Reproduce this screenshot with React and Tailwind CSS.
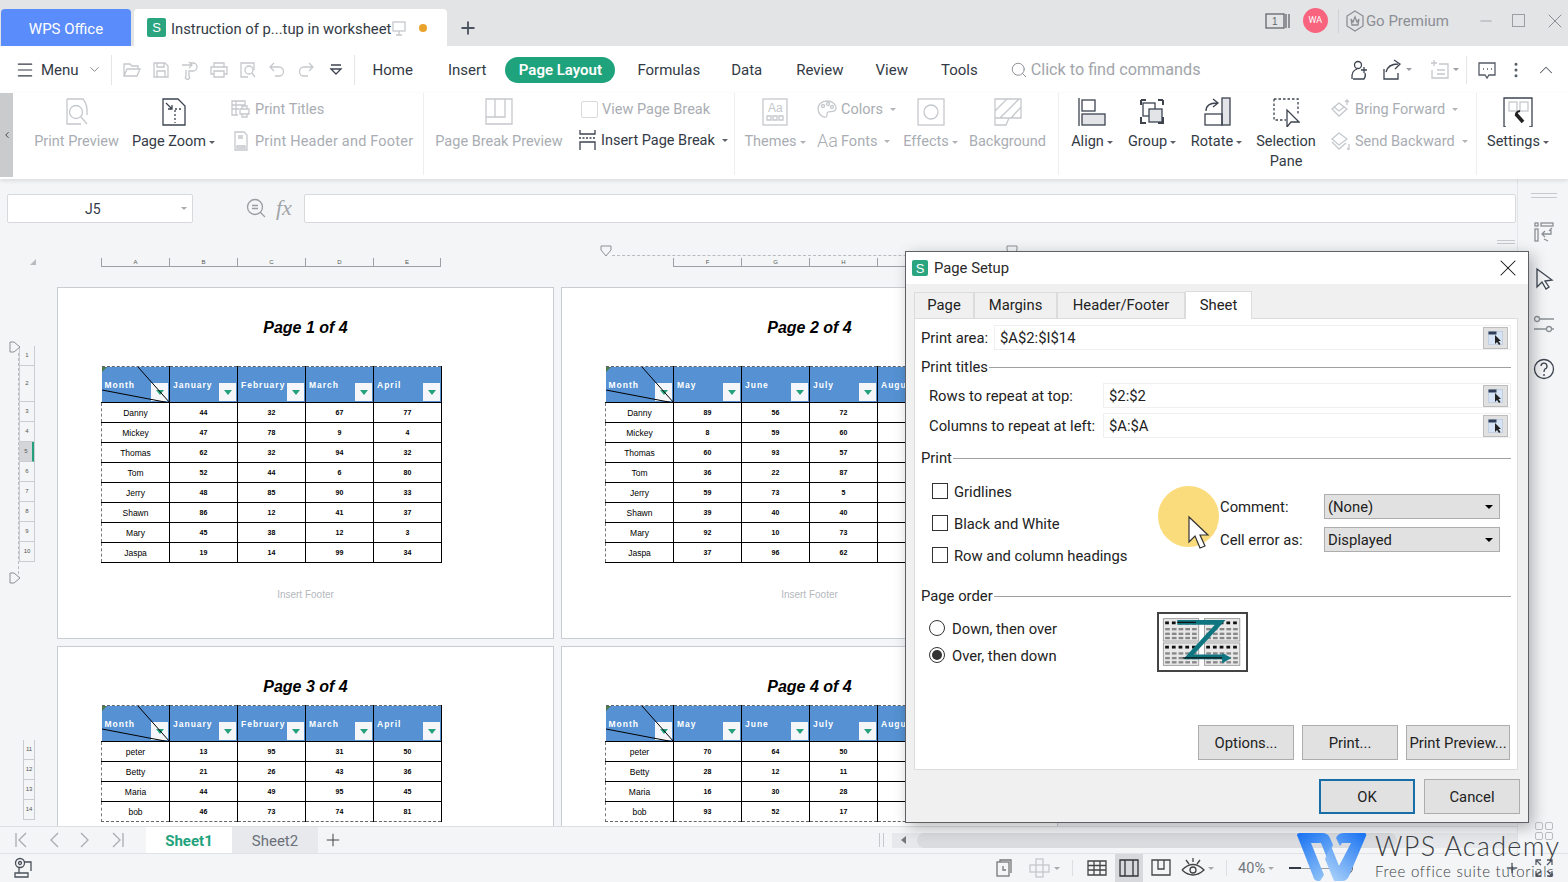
import { Menu, ChevronDown, Plus, Minus, Search, ChevronUp, EllipsisVertical, X, ChevronLeft } from "lucide-react"

const dark = "#3d4450"
const off = "#c5c8cc"

const page1 = {
    months: ["January", "February", "March", "April"],
    rows: [
        ["Danny", 44, 32, 67, 77],
        ["Mickey", 47, 78, 9, 4],
        ["Thomas", 62, 32, 94, 32],
        ["Tom", 52, 44, 6, 80],
        ["Jerry", 48, 85, 90, 33],
        ["Shawn", 86, 12, 41, 37],
        ["Mary", 45, 38, 12, 3],
        ["Jaspa", 19, 14, 99, 34],
    ],
}
const page2 = {
    months: ["May", "June", "July", "August"],
    rows: [
        ["Danny", 89, 56, 72, ""],
        ["Mickey", 8, 59, 60, ""],
        ["Thomas", 60, 93, 57, ""],
        ["Tom", 36, 22, 87, ""],
        ["Jerry", 59, 73, 5, ""],
        ["Shawn", 39, 40, 40, ""],
        ["Mary", 92, 10, 73, ""],
        ["Jaspa", 37, 96, 62, ""],
    ],
}
const page3 = {
    months: ["January", "February", "March", "April"],
    rows: [
        ["peter", 13, 95, 31, 50],
        ["Betty", 21, 26, 43, 36],
        ["Maria", 44, 49, 95, 45],
        ["bob", 46, 73, 74, 81],
    ],
}
const page4 = {
    months: ["May", "June", "July", "August"],
    rows: [
        ["peter", 70, 64, 50, ""],
        ["Betty", 28, 12, 11, ""],
        ["Maria", 16, 30, 28, ""],
        ["bob", 93, 52, 17, ""],
    ],
}

function Svg({ w = 28, h = 30, c = dark, children, sw = 1.3 }) {
    return (
        <svg width={w} height={h} viewBox={`0 0 ${w} ${h}`} fill="none" stroke={c} strokeWidth={sw} className="shrink-0">
            {children}
        </svg>
    )
}

function Caret({ c = "#9a9da3" }) {
    return <span className="inline-block ml-[3px] align-middle w-0 h-0 border-x-[3px] border-x-transparent border-t-[3px]" style={{ borderTopColor: c }} />
}

function SheetIcon({ size = 18 }) {
    return (
        <span className="flex items-center justify-center shrink-0 rounded-[2px] bg-[#2ba57f] text-white font-['Liberation_Sans',sans-serif] text-[13px] leading-none" style={{ width: size, height: size }}>
            S
        </span>
    )
}

function LargeBtn({ w, ml, label, disabled, caret, icon, second }) {
    return (
        <div className="flex flex-col items-center shrink-0 pt-[3px]" style={{ width: w, marginLeft: ml }}>
            <div className="h-[31px] flex items-center">{icon}</div>
            <div className={`mt-[5px] h-[20px] leading-[20px] whitespace-nowrap ${disabled ? "text-[#a9adb3]" : "text-[#333a45]"}`}>
                {label}
                {caret && <Caret c={disabled ? "#b0b3b8" : "#5c6168"} />}
            </div>
            {second && <div className="h-[20px] leading-[20px] text-[#333a45]">{second}</div>}
        </div>
    )
}

function SmallBtn({ label, disabled, caret, icon, iconW = 20, spread }) {
    return (
        <div className={`h-[22px] flex items-center gap-[4px] whitespace-nowrap ${disabled ? "text-[#a9adb3]" : "text-[#333a45]"}`}>
            <div className="flex justify-center shrink-0" style={{ width: iconW }}>{icon}</div>
            <span className={`pt-[2px] ${spread ? "tracking-[0.2px]" : ""}`}>{label}</span>
            {caret && <Caret c={disabled ? "#b0b3b8" : "#5c6168"} />}
        </div>
    )
}

function Sep({ ml }) {
    return <div className="w-px h-[82px] bg-[#edeef0] shrink-0" style={{ marginLeft: ml }} />
}

function FilterBox() {
    return (
        <span className="absolute right-[1px] bottom-[1px] w-[17px] h-[18px] bg-[#f4f6f8] flex items-center justify-center">
            <span className="w-0 h-0 border-x-[4px] border-x-transparent border-t-[5px] border-t-[#25a07c]" />
        </span>
    )
}

function PageTable({ data, dashBottom }) {
    return (
        <table className="border-collapse table-fixed w-[340px] font-['Liberation_Sans',sans-serif] text-black">
            <thead>
                <tr className="h-[36px] bg-[#5591d3] text-white text-[8.5px] font-bold tracking-[1px]">
                    <th className="relative w-[68px] p-0 pl-[3px] pt-[1px] text-left border-t border-t-[#5e6670] [border-top-style:dashed] border-r border-r-black border-b border-b-black overflow-hidden">
                        Month
                        <FilterBox />
                        <svg width="68" height="36" className="absolute left-0 top-0" stroke="#000" strokeWidth="1">
                            <path d="M36 0 L68 36" />
                            <path d="M0 23 L68 36" />
                            <path d="M0 0 h5 l-5 5z" fill="#4d7a4d" stroke="none" />
                        </svg>
                    </th>
                    {data.months.map((m) => (
                        <th key={m} className="relative w-[68px] p-0 pl-[3px] pt-[1px] text-left border-t border-t-[#5e6670] [border-top-style:dashed] border-r border-r-black border-b border-b-black whitespace-nowrap overflow-hidden">
                            {m}
                            <FilterBox />
                        </th>
                    ))}
                </tr>
            </thead>
            <tbody>
                {data.rows.map((r, ri) => {
                    const last = dashBottom && ri === data.rows.length - 1
                    const bottom = last ? "border-b border-b-[#666] [border-bottom-style:dashed]" : "border-b border-b-black"
                    return (
                        <tr key={r[0]} className="h-[20px]">
                            <td className={`p-0 pt-[1px] text-center text-[8.5px] border-l border-l-[#777] [border-left-style:dashed] border-r border-r-black ${bottom}`}>{r[0]}</td>
                            {r.slice(1).map((v, i) => (
                                <td key={i} className={`p-0 pt-[1px] text-center text-[7px] font-bold border-r border-r-black ${bottom}`}>{v}</td>
                            ))}
                        </tr>
                    )
                })}
            </tbody>
        </table>
    )
}

function PagePreview({ title, data, tall, footer }) {
    return (
        <div className={`w-[497px] bg-white border border-[#c9ccd1] shrink-0 relative ${tall ? "h-[352px]" : "h-[300px]"}`}>
            <div className="mt-[30px] text-center font-['Liberation_Sans',sans-serif] font-bold italic text-[16px] text-black h-[20px] leading-[20px]">
                {title}
            </div>
            <div className={`pl-[43px] ${tall ? "mt-[28px]" : "mt-[8px]"}`}>
                <PageTable data={data} dashBottom={!tall} />
            </div>
            {footer && <div className="mt-[24px] text-center text-[10px] text-[#b5b8bc] font-['Liberation_Sans',sans-serif]">Insert Footer</div>}
        </div>
    )
}

function RowNums({ nums, active }) {
    return (
        <div className="border-l border-r border-[#c9ccd1] w-[16px] ml-[19px] font-['Liberation_Sans',sans-serif] text-[6px] text-[#555]">
            {nums.map((n) => (
                <div
                    key={n}
                    className={`flex items-center justify-center border-b border-[#c9ccd1] ${n === 2 ? "h-[36px]" : "h-[20px]"} ${n === active ? "bg-[#d4d5d8] border-r-2 border-r-[#25a07c]" : ""}`}
                >
                    {n}
                </div>
            ))}
        </div>
    )
}

function TopRuler({ ml, letters }) {
    return (
        <div className="flex h-[9px] border-b border-[#9ca0a6] shrink-0 font-['Liberation_Sans',sans-serif] text-[6px] text-[#555]" style={{ marginLeft: ml }}>
            {letters.map((l) => (
                <div key={l} className="w-[68px] border-l last:border-r border-[#9ca0a6] text-center leading-[9px]">{l}</div>
            ))}
        </div>
    )
}

function HandleTri({ className }) {
    return (
        <svg width="12" height="12" viewBox="0 0 12 12" fill="#f3f5f7" stroke="#8d9095" className={className}>
            <path d="M1 1 H11 V5 L6 11 L1 5 Z" />
        </svg>
    )
}

function HandleRight({ className }) {
    return (
        <svg width="12" height="12" viewBox="0 0 12 12" fill="#f3f5f7" stroke="#8d9095" className={className}>
            <path d="M1 1 V11 H5 L11 6 L5 1 Z" />
        </svg>
    )
}

function Pick() {
    return (
        <span className="w-[25px] h-[22px] bg-[#e1e1e1] border border-[#bdbdbd] flex items-center justify-center shrink-0">
            <svg width="15" height="14" viewBox="0 0 15 14">
                <rect x="0.5" y="0.5" width="14" height="13" fill="#d6e4f5" stroke="#c3d0df" />
                <rect x="0.5" y="0.5" width="8" height="3" fill="#2f3e56" />
                <path d="M7 4 L7 13 L9 11 L11 14 L12.5 13 L10.5 10 L13 10 Z" fill="#222" />
            </svg>
        </span>
    )
}

function Field({ label, value, labelW, pl }) {
    return (
        <div className="flex items-center" style={{ paddingLeft: pl }}>
            <span className="whitespace-nowrap shrink-0 pt-[2px]" style={{ width: labelW }}>{label}</span>
            <div className="w-full flex items-center justify-between h-[25px] border border-[#f0f0f0] pl-[5px] pr-[2px]">
                <span className="pt-[2px]">{value}</span>
                <Pick />
            </div>
        </div>
    )
}

function SectionLine({ label }) {
    return (
        <div className="flex items-center h-[20px] pl-[6px]">
            <span className="whitespace-nowrap">{label}</span>
            <div className="flex-1 h-px bg-[#a0a0a0] ml-[1px]" />
        </div>
    )
}

function Check({ label }) {
    return (
        <div className="flex items-center h-[20px] gap-[6px]">
            <span className="w-[16px] h-[16px] border border-[#333] bg-white" />
            <span className="pt-[2px]">{label}</span>
        </div>
    )
}

function Select({ value }) {
    return (
        <div className="w-[176px] h-[25px] bg-[#e1e1e1] border border-[#adadad] flex items-center justify-between pl-[3px] pr-[6px]">
            <span className="pt-[2px]">{value}</span>
            <span className="w-0 h-0 border-x-[4px] border-x-transparent border-t-[4px] border-t-black" />
        </div>
    )
}

function DlgBtn({ label, w = 96, primary }) {
    return (
        <div
            className={`h-[35px] bg-[#e1e1e1] flex items-center justify-center shrink-0 pt-[2px] ${primary ? "border-2 border-[#1a6ea8]" : "border border-[#adadad]"}`}
            style={{ width: w }}
        >
            {label}
        </div>
    )
}

function PageOrderPic() {
    const mini = (x, y) => (
        <g key={`${x}${y}`}>
            <rect x={x} y={y} width="38" height="24" fill="#e8e8e8" stroke="#8b8b8b" strokeWidth="0.8" />
            {[0, 1, 2, 3, 4].map((i) => (
                <rect key={i} x={x + 2 + i * 7.2} y={y + 3} width="4" height="3" fill="#111" />
            ))}
            {[0, 1, 2, 3, 4].map((i) => (
                <g key={i}>
                    <rect x={x + 2 + i * 7.2} y={y + 10} width="5" height="2.5" fill="#888" />
                    <rect x={x + 2 + i * 7.2} y={y + 15} width="5" height="2.5" fill="#888" />
                    <rect x={x + 2 + i * 7.2} y={y + 19.5} width="5" height="2.5" fill="#888" />
                </g>
            ))}
        </g>
    )
    return (
        <svg width="91" height="60" viewBox="0 0 90 60" className="shrink-0 border-2 border-[#444] bg-white">
            {mini(3, 5)}
            {mini(47, 5)}
            {mini(3, 31)}
            {mini(47, 31)}
            <path d="M18 9 H64 L30 46 H70" fill="none" stroke="#0f7580" strokeWidth="5" />
            <path d="M18 9 H38 M24 47 H72" stroke="#111" strokeWidth="1.2" />
            <path d="M66 42 L76 47 L66 53Z" fill="#0f7580" />
        </svg>
    )
}

function Dialog() {
    return (
        <div className="absolute left-[905px] top-[251px] w-[624px] h-[572px] border border-[#5e6064] bg-[#f0f0f0] shadow-[4px_4px_14px_rgba(0,0,0,0.28)] text-[14.8px] text-[#222] z-10">
            <div className="h-[32px] bg-white flex items-center pl-[6px] pr-[6px]">
                <SheetIcon size={16} />
                <span className="ml-[6px] flex-1 text-[#2a2a2a]">Page Setup</span>
                <X size={28} strokeWidth={0.9} color="#111" />
            </div>
            <div className="flex pl-[8px] pt-[7px] h-[34px] items-end">
                {[["Page", 60], ["Margins", 83], ["Header/Footer", 128]].map(([t, w]) => (
                    <div key={t} className="h-[26px] border border-b-0 border-[#dcdcdc] flex items-center justify-center bg-[#f0f0f0]" style={{ width: w }}>{t}</div>
                ))}
                <div className="h-[28px] w-[67px] bg-white border border-b-0 border-[#dcdcdc] flex items-center justify-center -mb-px z-10">Sheet</div>
            </div>
            <div className="ml-[8px] w-[604px] h-[452px] bg-white border border-[#dcdcdc] pr-[6px]">
                <div className="mt-[6px]">
                    <Field label="Print area:" value="$A$2:$I$14" labelW={73} pl={6} />
                </div>
                <div className="mt-[7px]"><SectionLine label="Print titles" /></div>
                <div className="mt-[6px]">
                    <Field label="Rows to repeat at top:" value="$2:$2" labelW={174} pl={14} />
                </div>
                <div className="mt-[5px]">
                    <Field label="Columns to repeat at left:" value="$A:$A" labelW={174} pl={14} />
                </div>
                <div className="mt-[10px]"><SectionLine label="Print" /></div>
                <div className="flex mt-[13px] pl-[17px]">
                    <div className="w-[288px] flex flex-col gap-[12px]">
                        <Check label="Gridlines" />
                        <Check label="Black and White" />
                        <Check label="Row and column headings" />
                    </div>
                    <div className="pt-[13px] flex flex-col gap-[8px]">
                        <div className="flex items-center">
                            <span className="w-[104px] pt-[2px]">Comment:</span>
                            <Select value="(None)" />
                        </div>
                        <div className="flex items-center">
                            <span className="w-[104px] pt-[2px]">Cell error as:</span>
                            <Select value="Displayed" />
                        </div>
                    </div>
                </div>
                <div className="mt-[21px]"><SectionLine label="Page order" /></div>
                <div className="flex mt-[6px] pl-[14px]">
                    <div className="w-[228px] pt-[6px] flex flex-col gap-[7px]">
                        <div className="flex items-center h-[20px] gap-[7px]">
                            <span className="w-[16px] h-[16px] rounded-full border border-[#333]" />
                            <span className="pt-[2px]">Down, then over</span>
                        </div>
                        <div className="flex items-center h-[20px] gap-[7px]">
                            <span className="w-[16px] h-[16px] rounded-full border border-[#333] flex items-center justify-center">
                                <span className="w-[10px] h-[10px] rounded-full bg-[#333]" />
                            </span>
                            <span className="pt-[2px]">Over, then down</span>
                        </div>
                    </div>
                    <PageOrderPic />
                </div>
                <div className="flex justify-end gap-[8px] mt-[53px] pr-[1px]">
                    <DlgBtn label="Options..." />
                    <DlgBtn label="Print..." />
                    <DlgBtn label="Print Preview..." w={104} />
                </div>
            </div>
            <div className="flex justify-end gap-[9px] mt-[9px] pr-[8px]">
                <DlgBtn label="OK" primary />
                <DlgBtn label="Cancel" />
            </div>
        </div>
    )
}

function QuickIcons() {
    return (
        <div className="flex items-center">
            <div className="w-[29px] flex justify-center">
                <Svg w={20} h={20} c={off}><path d="M2 16 V4 H8 L10 6 H16 V9 M2 16 L5 9 H18 L15 16 Z" /></Svg>
            </div>
            <div className="w-[29px] flex justify-center">
                <Svg w={20} h={20} c={off}><path d="M3 3 H14 L17 6 V17 H3 Z M6 3 V7 H13 V3 M6 17 V11 H14 V17" /></Svg>
            </div>
            <div className="w-[29px] flex justify-center">
                <Svg w={20} h={20} c={off}><path d="M2 5 H12 M9 2 L12 5 L9 8 M10 3 H13 A4 4 0 0 1 13 11 H9 V16 A2 2 0 1 1 6 16 V10" /></Svg>
            </div>
            <div className="w-[29px] flex justify-center">
                <Svg w={20} h={20} c={off}><path d="M5 7 V3 H15 V7 M5 14 H2 V7 H18 V14 H15 M5 11 H15 V17 H5 Z" /></Svg>
            </div>
            <div className="w-[29px] flex justify-center">
                <Svg w={20} h={20} c={off}><path d="M16 10 V3 H3 V17 H10" /><circle cx="11" cy="10" r="4" /><path d="M14 13 L17 17" /></Svg>
            </div>
            <div className="w-[29px] flex justify-center">
                <Svg w={20} h={20} c={off}><path d="M7 3 L3 7 L7 11 M3 7 H12 A4 4 0 0 1 12 16 H8" /></Svg>
            </div>
            <div className="w-[29px] flex justify-center">
                <Svg w={20} h={20} c={off}><path d="M13 3 L17 7 L13 11 M17 7 H8 A4 4 0 0 0 8 16 H12" /></Svg>
            </div>
            <div className="w-[31px] flex justify-center">
                <Svg w={14} h={14} c={dark}><path d="M2 2 H12 M2 6 L7 11 L12 6 Z" /></Svg>
            </div>
        </div>
    )
}

function Ribbon() {
    return (
        <div className="flex items-start h-[86px] bg-white shadow-[0_2px_4px_rgba(0,0,0,0.10)] relative z-[1] text-[14.5px]">
            <div className="w-[13px] h-[84px] bg-[#cacbcd] flex items-center justify-center shrink-0">
                <ChevronLeft size={10} color="#333" />
            </div>
            <LargeBtn w={85} ml={21} disabled label="Print Preview" icon={
                <Svg c={off}><path d="M4 2 H20 Q25 8 24 18 M4 2 V27 H18" /><circle cx="13" cy="15" r="6.5" /><path d="M18 20 L24 27" /></Svg>
            } />
            <LargeBtn w={85} ml={12} label="Page Zoom" caret icon={
                <Svg w={26}><path d="M2 2 H17 L24 9 V28 H2 Z" /><path d="M5 6 L11 12 M11 8 V12 H7" /><path d="M14 13 V26 M14 12 H22" strokeDasharray="2 2" /></Svg>
            } />
            <div className="ml-[15px] w-[183px] pt-[5px] flex flex-col gap-[10px] shrink-0">
                <SmallBtn disabled label="Print Titles" icon={
                    <Svg w={20} h={20} c={off}><path d="M1 2 H14 V6 H1 Z M1 6 V16 H7 M5 2 V16 M1 10 H8" /><path d="M9 10 H18 V15 H9 Z M11 10 V7 H16 V10 M11 15 V18 H16 V15" /></Svg>
                } />
                <SmallBtn disabled spread label="Print Header and Footer" icon={
                    <Svg w={16} h={20} c={off}><path d="M2 1 H11 L14 4 V19 H2 Z M5 5 H10 M5 7 H10 M4 15 H12 V17 H4 Z" /></Svg>
                } />
            </div>
            <Sep ml={9} />
            <LargeBtn w={128} ml={11} disabled label="Page Break Preview" icon={
                <Svg c={off}><path d="M1 2 H27 V27 H1 Z M1 20 H20 V2 M10 2 V20" /></Svg>
            } />
            <div className="ml-[15px] w-[146px] pt-[5px] flex flex-col gap-[9px] shrink-0">
                <div className="pl-[3px]">
                    <div className="h-[22px] flex items-center gap-[4px] text-[#a9adb3] whitespace-nowrap">
                        <span className="w-[17px] h-[17px] border border-[#d8dadd] rounded-[2px]" />
                        <span className="pt-[2px]">View Page Break</span>
                    </div>
                </div>
                <SmallBtn label="Insert Page Break" caret iconW={19} icon={
                    <Svg w={19} h={22}><path d="M2 1 V5 H17 V1 M2 21 V13 H17 V21" /><path d="M1 9 H18" strokeDasharray="2 1.5" /></Svg>
                } />
            </div>
            <Sep ml={10} />
            <LargeBtn w={60} ml={10} disabled label="Themes" caret icon={
                <Svg w={26} c={off}>
                    <rect x="1" y="2" width="24" height="26" />
                    <text x="6" y="15" fontSize="12" fill={off} stroke="none" fontFamily="Liberation Sans">Aa</text>
                    <path d="M5 19 h4 v4 h-4z M11 19 h4 v4 h-4z M17 19 h4 v4 h-4z" />
                </Svg>
            } />
            <div className="ml-[12px] w-[70px] pt-[5px] flex flex-col gap-[10px] shrink-0">
                <SmallBtn disabled label="Colors" caret icon={
                    <Svg w={20} h={20} c={off}><path d="M10 2 C4 2 1 6 1 10 C1 15 6 19 9 18 C11 17 9 14 11 13 C13 12 19 14 19 9 C19 5 15 2 10 2 Z" /><circle cx="6" cy="7" r="1.5" /><circle cx="11" cy="5" r="1.5" /><circle cx="15" cy="8" r="1.5" /></Svg>
                } />
                <div className="h-[22px] flex items-center gap-[4px] text-[#a9adb3] whitespace-nowrap">
                    <span className="w-[20px] text-[18px] leading-none text-center font-light">Aa</span>
                    <span className="pt-[2px]">Fonts</span>
                    <Caret c="#b0b3b8" />
                </div>
            </div>
            <LargeBtn w={55} ml={16} disabled label="Effects" caret icon={
                <Svg c={off}><rect x="1" y="2" width="26" height="26" /><circle cx="14" cy="15" r="7" /></Svg>
            } />
            <LargeBtn w={79} ml={10} disabled label="Background" icon={
                <Svg c={off}><path d="M1 2 H27 V21 H1 Z M1 14 L13 2 M6 21 L25 2 M17 21 L27 10 M1 21 V28 H12 L15 21" /></Svg>
            } />
            <Sep ml={11} />
            <LargeBtn w={44} ml={11} caret label="Align" icon={
                <Svg><path d="M1 1 V29" /><rect x="4" y="3" width="13" height="11" /><rect x="4" y="17" width="23" height="11" fill="#e2e4e8" /></Svg>
            } />
            <LargeBtn w={50} ml={13} caret label="Group" icon={
                <Svg>
                    <path d="M3 3 H8 M20 3 H25 M3 3 V8 M25 3 V8 M3 20 V26 H8 M25 20 V26 H20" strokeWidth="2" />
                    <rect x="5" y="6" width="12" height="13" />
                    <rect x="11" y="12" width="13" height="13" fill="#e2e4e8" />
                </Svg>
            } />
            <LargeBtn w={53} ml={13} caret label="Rotate" icon={
                <Svg><rect x="19" y="1" width="8" height="27" fill="#e2e4e8" /><rect x="2" y="17" width="17" height="11" /><path d="M3 14 C3 8 7 6 14 6 M10 2 L15 6 L10 10" /></Svg>
            } />
            <LargeBtn w={62} ml={12} label="Selection" second="Pane" icon={
                <Svg>
                    <path d="M2 2 H26 V18 M2 2 V23 H14" strokeDasharray="2.5 2" />
                    <path d="M15 13 V30 L19 25 H27 Z" fill="#fff" />
                </Svg>
            } />
            <div className="ml-[14px] w-[136px] pt-[5px] flex flex-col gap-[10px] shrink-0">
                <SmallBtn disabled caret label="Bring Forward" icon={
                    <Svg w={20} h={20} c={off}><path d="M8 4 L16 10 L8 17 L1 10 Z M3 8 L8 4 L13 8 L8 12 Z M16 6 V1 M14 3 L16 1 L18 3" /></Svg>
                } />
                <SmallBtn disabled caret label="Send Backward" icon={
                    <Svg w={20} h={20} c={off}><path d="M8 2 L16 8 L8 14 L1 8 Z M1 11 L8 18 L15 12 M18 13 V19 M16 17 L18 19" /></Svg>
                } />
            </div>
            <Sep ml={9} />
            <LargeBtn w={62} ml={10} caret label="Settings" icon={
                <Svg w={30}>
                    <path d="M3 30 H1 V1 H29 V30 H26" />
                    <rect x="6" y="5" width="8" height="9" stroke={off} />
                    <rect x="17" y="5" width="8" height="9" stroke={off} />
                    <path d="M13 17 L20 25" strokeWidth="3.5" stroke="#222" />
                    <path d="M17 14 Q12 15 13 19" strokeWidth="2" stroke="#222" />
                </Svg>
            } />
        </div>
    )
}

function Sidebar() {
    return (
        <div className="w-[51px] shrink-0 bg-[#f3f5f7] border-l border-[#e3e5e8] flex flex-col items-center pl-[2px] pt-[14px] gap-[24px]">
            <div className="w-[26px] h-[5px] border-y border-[#c5c8cc]" />
            <Svg w={20} h={20} c="#8b9097"><rect x="1" y="1" width="3" height="3" /><rect x="7" y="1" width="12" height="3" /><rect x="1" y="7" width="3" height="12" /><path d="M17 8 V12 H9 M11 9 L8 12 L11 15 M15 9 L18 6 M14 19 L10 17" /></Svg>
            <Svg w={20} h={24} c="#3d4450"><path d="M3 3 V21 L8 16 L12 23 L15 21 L11 15 L18 14 Z" /></Svg>
            <Svg w={22} h={20} c="#8b9097"><circle cx="4" cy="5" r="2.5" /><path d="M7 5 H21 M1 15 H13" /><circle cx="16" cy="15" r="2.5" /><path d="M19 15 H21" /></Svg>
            <Svg w={22} h={22} c="#3d4450"><circle cx="11" cy="11" r="9.5" /><path d="M8 8 A3 3 0 1 1 12 11 Q11 12 11 14 M11 16 V18" /></Svg>
        </div>
    )
}

function SheetArea() {
    return (
        <div className="flex-1 min-h-0 min-w-0 overflow-hidden relative bg-[#f3f5f7]">
            <div className="h-[52px] flex items-start pt-[23px] relative">
                <div className="absolute left-[30px] top-[24px] w-0 h-0 border-l-[6px] border-l-transparent border-b-[6px] border-b-[#b8bbc0]" />
                <TopRuler ml={101} letters={["A", "B", "C", "D", "E"]} />
                <TopRuler ml={232} letters={["F", "G", "H", "I"]} />
                <HandleTri className="absolute left-[600px] top-[10px]" />
                <div className="absolute left-[612px] top-[20px] w-[400px] border-t border-dashed border-[#b8bbc0]" />
                <HandleTri className="absolute left-[1006px] top-[10px]" />
                <div className="absolute left-[1497px] top-[5px] w-[18px] h-[4px] border-y border-[#c5c8cc]" />
            </div>
            <div className="flex items-start">
                <div className="w-[57px] shrink-0 relative">
                    <div className="pt-[59px]">
                        <RowNums nums={[1, 2, 3, 4, 5, 6, 7, 8, 9, 10]} active={5} />
                    </div>
                    <HandleRight className="absolute left-[9px] top-[54px]" />
                    <div className="absolute left-[18px] top-[66px] h-[226px] border-l border-dashed border-[#b8bbc0]" />
                    <HandleRight className="absolute left-[9px] top-[285px]" />
                    <div className="mt-[178px] [&>div]:w-[12px] [&>div]:ml-[23px]">
                        <RowNums nums={[11, 12, 13, 14]} />
                    </div>
                </div>
                <div className="grid grid-cols-[497px_497px] gap-x-[7px] gap-y-[7px]">
                    <PagePreview title="Page 1 of 4" data={page1} tall footer />
                    <PagePreview title="Page 2 of 4" data={page2} tall footer />
                    <PagePreview title="Page 3 of 4" data={page3} />
                    <PagePreview title="Page 4 of 4" data={page4} />
                </div>
            </div>
        </div>
    )
}

function Watermark() {
    return (
        <div className="absolute left-[1296px] top-[832px] w-[272px] h-[50px] flex z-20 pointer-events-none">
            <svg width="72" height="50" viewBox="0 0 72 50" className="shrink-0">
                <defs>
                    <linearGradient id="wpsa" x1="0" y1="0" x2="0.6" y2="1">
                        <stop offset="0" stopColor="#1570f2" />
                        <stop offset="1" stopColor="#8cc0f7" />
                    </linearGradient>
                    <linearGradient id="wpsb" x1="1" y1="0" x2="0.2" y2="1">
                        <stop offset="0" stopColor="#1570f2" />
                        <stop offset="1" stopColor="#a9d0f9" />
                    </linearGradient>
                </defs>
                <path d="M1 3 Q1 1 4 1 H26 Q32 1 34 6 L37 13 L31 26 L25 11 H15 L28 43 L24 49 H22 Q18 49 17 44 Z" fill="url(#wpsa)" />
                <path d="M40 6 Q42 1 48 1 H68 Q71 1 70 4 L53 44 Q51 49 46 49 H38 L29 27 L35 14 L43 34 L55 11 H46 L44 14 Z" fill="url(#wpsb)" />
            </svg>
            <div className="ml-[7px] flex flex-col text-[#3a3d42] font-['Lato',sans-serif] whitespace-nowrap">
                <span className="text-[27px] leading-[28px] font-light tracking-[1.3px]">WPS Academy</span>
                <span className="text-[15px] leading-[18px] mt-[2px] tracking-[0.7px] font-light">Free office suite tutorials</span>
            </div>
        </div>
    )
}

export default function App() {
    return (
        <div className="relative w-[1568px] h-[882px] overflow-hidden flex flex-col bg-[#f3f5f7] font-['Roboto',sans-serif] text-[#333a45]">
            {/* title bar */}
            <div className="h-[46px] bg-[#e3e4e6] flex items-end shrink-0 pl-[1px]">
                <div className="w-[130px] h-[37px] bg-[#5a8cfb] rounded-t-[4px] flex items-center justify-center text-white text-[15px] pt-[3px]">WPS Office</div>
                <div className="ml-[3px] w-[313px] h-[37px] bg-white rounded-t-[4px] flex items-center pl-[13px] text-[14.8px] text-[#333a45]">
                    <SheetIcon size={19} />
                    <span className="ml-[5px] whitespace-nowrap pt-[3px]">Instruction of p...tup in worksheet</span>
                    <Svg w={16} h={18} c={off}><rect x="2" y="3" width="12" height="9" /><path d="M8 12 V16 M5 16 H11" /></Svg>
                    <span className="ml-[12px] w-[8px] h-[8px] rounded-full bg-[#e9a32c]" />
                </div>
                <div className="ml-[11px] h-[37px] flex items-center"><Plus size={20} strokeWidth={2.2} color="#4b5360" /></div>
                <div className="flex-1" />
                <div className="h-[41px] self-start flex items-center text-[#8b8f95]">
                    <Svg w={26} h={20} c="#63676d"><rect x="1" y="3" width="18" height="14" /><path d="M21 3 V17 M24 3 V17" /><text x="7" y="14" fontSize="10" fill="#63676d" stroke="none" fontFamily="Liberation Sans">1</text></Svg>
                    <span className="ml-[12px] w-[25px] h-[25px] rounded-full bg-[#f8647e] text-white text-[9px] flex items-center justify-center">WA</span>
                    <div className="ml-[10px] w-px h-[24px] bg-[#d0d1d4]" />
                    <span className="ml-[6px]"><Svg w={20} h={22} c="#8b8f95"><path d="M10 1 L18 6 V16 L10 21 L2 16 V6 Z M6 9 L8 12 L10 7 L12 12 L14 9 L13 15 H7 Z" /></Svg></span>
                    <span className="ml-[1px] text-[15px] pt-[2px]">Go Premium</span>
                    <Minus className="ml-[28px]" size={18} strokeWidth={1.1} color="#9a9da2" />
                    <span className="ml-[17px] w-[13px] h-[13px] border border-[#9a9da2]" />
                    <X className="ml-[18px] mr-[1px]" size={24} strokeWidth={1} color="#8b8f95" />
                </div>
            </div>
            {/* menu row */}
            <div className="h-[47px] bg-white flex items-center shrink-0 text-[15px] relative">
                <Menu className="ml-[15px]" size={20} strokeWidth={1.4} color="#333a45" />
                <span className="ml-[6px] pt-[2px]">Menu</span>
                <ChevronDown className="ml-[8px]" size={15} strokeWidth={1.4} color="#777" />
                <div className="ml-[9px] w-px h-[30px] bg-[#e4e5e7]" />
                <div className="ml-[6px]"><QuickIcons /></div>
                <div className="ml-[2px] w-px h-[30px] bg-[#e4e5e7]" />
                <span className="ml-[18px] pt-[2px]">Home</span>
                <span className="ml-[35px] pt-[2px]">Insert</span>
                <span className="ml-[19px] w-[110px] h-[26px] rounded-full bg-[#1fa37c] text-white font-semibold flex items-center justify-center pt-[2px]">Page Layout</span>
                <span className="ml-[22px] pt-[2px]">Formulas</span>
                <span className="ml-[31px] pt-[2px]">Data</span>
                <span className="ml-[34px] pt-[2px]">Review</span>
                <span className="ml-[32px] pt-[2px]">View</span>
                <span className="ml-[33px] pt-[2px]">Tools</span>
                <Search className="ml-[32px]" size={18} strokeWidth={1.3} color="#8b8f95" />
                <span className="ml-[3px] text-[#a2a5aa] text-[16.2px] pt-[1px]">Click to find commands</span>
                <div className="flex-1" />
                <Svg w={22} h={22}><circle cx="10" cy="6" r="3.5" /><path d="M4 20 Q3 12 9 10 M5 20 H16 Q18 18 17 14 M16 8 V14 M13 11 H19" /></Svg>
                <span className="ml-[11px]"><Svg w={22} h={22}><path d="M3 10 V20 H17 V14 M5 13 Q7 5 17 5 M13 1 L19 5 L14 10" /></Svg></span>
                <Caret />
                <span className="ml-[16px]"><Svg w={22} h={22} c={off}><path d="M6 1 V7 M3 4 H9 M11 5 H20 V19 H4 V11 M9 11 H17 M9 15 H17" /></Svg></span>
                <Caret />
                <div className="ml-[7px] w-px h-[28px] bg-[#e4e5e7]" />
                <span className="ml-[10px]"><Svg w={20} h={20} c="#555b65"><path d="M2 3 H18 V15 H12 L10 18 L8 15 H2 Z M6 9 H7 M10 9 H11 M14 9 H15" /></Svg></span>
                <EllipsisVertical className="ml-[9px]" size={20} strokeWidth={1.6} color="#555b65" />
                <ChevronUp className="ml-[9px] mr-[11px]" size={22} strokeWidth={1.1} color="#555b65" />
            </div>
            <Ribbon />
            {/* below ribbon */}
            <div className="flex-1 min-h-0 flex">
                <div className="flex-1 min-w-0 min-h-0 flex flex-col">
                    <div className="h-[56px] shrink-0 flex items-start pt-[15px] pl-[7px] pr-[1px] bg-[#f3f5f7]">
                        <div className="w-[186px] h-[29px] bg-white border border-[#d7d9dc] rounded-[2px] flex items-center justify-between pl-[77px] pr-[5px] text-[14px]">
                            <span className="pt-[2px]">J5</span>
                            <Caret c="#aaa" />
                        </div>
                        <span className="ml-[52px] mt-[3px]"><Svg w={22} h={22} c="#9a9da2"><circle cx="10" cy="10" r="7.5" /><path d="M7 8.5 H13 M7 11.5 H13 M15 15 L20 20" /></Svg></span>
                        <span className="ml-[9px] mt-[2px] w-[21px] font-['Liberation_Serif',serif] italic text-[#a2a5aa] text-[22px] leading-[24px]">fx</span>
                        <div className="ml-[7px] flex-1 h-[29px] bg-white border border-[#d7d9dc] rounded-[2px]" />
                    </div>
                    <SheetArea />
                    {/* sheet tabs */}
                    <div className="h-[27px] shrink-0 bg-[#f3f5f7] border-t border-[#dcdee1] flex items-center relative z-[1]">
                        <span className="ml-[14px] flex"><Svg w={16} h={18} c="#a9acb1"><path d="M2 2 V16 M12 2 L5 9 L12 16" /></Svg></span>
                        <span className="ml-[16px] flex"><Svg w={16} h={18} c="#a9acb1"><path d="M12 2 L5 9 L12 16" /></Svg></span>
                        <span className="ml-[15px] flex"><Svg w={16} h={18} c="#a9acb1"><path d="M4 2 L11 9 L4 16" /></Svg></span>
                        <span className="ml-[16px] flex"><Svg w={16} h={18} c="#a9acb1"><path d="M4 2 L11 9 L4 16 M14 2 V16" /></Svg></span>
                        <div className="ml-[21px] w-[86px] h-[26px] bg-white text-[#1fa37c] font-bold flex items-center justify-center text-[15px] pt-[2px]">Sheet1</div>
                        <div className="w-[86px] h-[26px] bg-[#e7e9ec] text-[#6b7079] flex items-center justify-center text-[15px] pt-[2px]">Sheet2</div>
                        <Plus className="ml-[5px]" size={20} strokeWidth={1.2} color="#444" />
                        <div className="flex-1" />
                        <div className="w-[5px] h-[14px] border-x border-[#c5c8cc] mr-[8px]" />
                        <div className="w-[625px] h-[15px] bg-[#e6e8eb] flex items-center pl-[9px]">
                            <div className="w-0 h-0 border-y-[4px] border-y-transparent border-r-[5px] border-r-[#777]" />
                            <div className="ml-[11px] w-[480px] h-[15px] rounded-full bg-[#d9dbdf]" />
                        </div>
                    </div>
                </div>
                <Sidebar />
            </div>
            {/* status bar */}
            <div className="h-[29px] shrink-0 bg-[#f3f5f7] border-t border-[#e0e2e5] flex items-center text-[#72767d] text-[14.5px]">
                <span className="ml-[12px]"><Svg w={22} h={22} c="#4a5059"><circle cx="8" cy="6" r="4.5" /><circle cx="8" cy="6" r="1.5" /><path d="M12 5 H19 V14 M7 11 V16 M3 16 H16 V20 H3 Z" /></Svg></span>
                <div className="flex-1" />
                <Svg w={18} h={20} c="#777"><rect x="2" y="4" width="12" height="14" /><path d="M5 4 V2 H16 V15 M8 8 V12 H11" /></Svg>
                <span className="ml-[14px]"><Svg w={24} h={20} c={off}><rect x="9" y="1" width="7" height="18" /><rect x="3" y="7" width="19" height="7" /></Svg></span>
                <Caret c="#aaa" />
                <div className="ml-[12px] mr-[14px] w-px h-[16px] bg-[#dcdee1]" />
                <Svg w={20} h={18} c="#444"><path d="M1 2 H19 V16 H1 Z M1 6.5 H19 M1 11 H19 M7 2 V16 M13 2 V16" /></Svg>
                <div className="ml-[8px] w-[28px] h-[29px] bg-[#d7d9dd] flex items-center justify-center">
                    <Svg w={20} h={18} c="#333"><path d="M1 1 H19 V17 H1 Z M6 1 V17 M14 1 V17" /></Svg>
                </div>
                <span className="ml-[8px]"><Svg w={20} h={18} c="#444"><path d="M1 1 H19 V16 H1 Z M7 1 V10 H13 V1" /></Svg></span>
                <span className="ml-[10px]"><Svg w={24} h={20} c="#444"><circle cx="12" cy="12" r="3" /><path d="M1 12 Q12 1 23 12 Q12 22 1 12 M5 2 L8 6 M12 0 V4 M19 2 L16 6" /></Svg></span>
                <Caret c="#aaa" />
                <div className="ml-[12px] mr-[11px] w-px h-[16px] bg-[#dcdee1]" />
                <span className="pt-[2px]">40%</span>
                <Caret c="#aaa" />
                <div className="ml-[15px] w-[12px] h-[2px] bg-[#333a45]" />
                <div className="w-[38px] h-px bg-[#9a9da2]" />
                <span className="w-[14px] h-[14px] rounded-full border border-[#555]" />
                <div className="ml-[151px] flex"><Plus size={16} strokeWidth={2} color="#555b65" /></div>
                <span className="ml-[15px] mr-[15px] flex"><Svg w={18} h={18} c="#555b65"><path d="M1 6 V1 H6 M12 1 H17 V6 M1 12 V17 H6 M12 17 H17 V12 M1 1 L6 6 M17 1 L12 6 M1 17 L6 12 M17 17 L12 12" /></Svg></span>
            </div>
            <Dialog />
            {/* click highlight and cursor */}
            <div className="absolute left-[1158px] top-[486px] w-[61px] h-[61px] rounded-full bg-[#fbdc7c] z-20" />
            <svg width="24" height="36" viewBox="0 0 24 36" className="absolute left-[1187px] top-[515px] z-20">
                <path d="M2 2 V27 L8 21 L13 33 L18 31 L13 20 L21 20 Z" fill="#fff" stroke="#333" strokeWidth="1.2" />
            </svg>
            <div className="absolute left-[1535px] top-[822px] grid grid-cols-2 gap-[2px] z-20">
                <span className="w-[8px] h-[8px] border border-[#b8bbc0] rounded-[2px]" />
                <span className="w-[8px] h-[8px] border border-[#b8bbc0] rounded-[2px]" />
                <span className="w-[8px] h-[8px] border border-[#b8bbc0] rounded-[2px]" />
                <span className="w-[8px] h-[8px] border border-[#b8bbc0] rounded-[2px]" />
            </div>
            <Watermark />
        </div>
    )
}
